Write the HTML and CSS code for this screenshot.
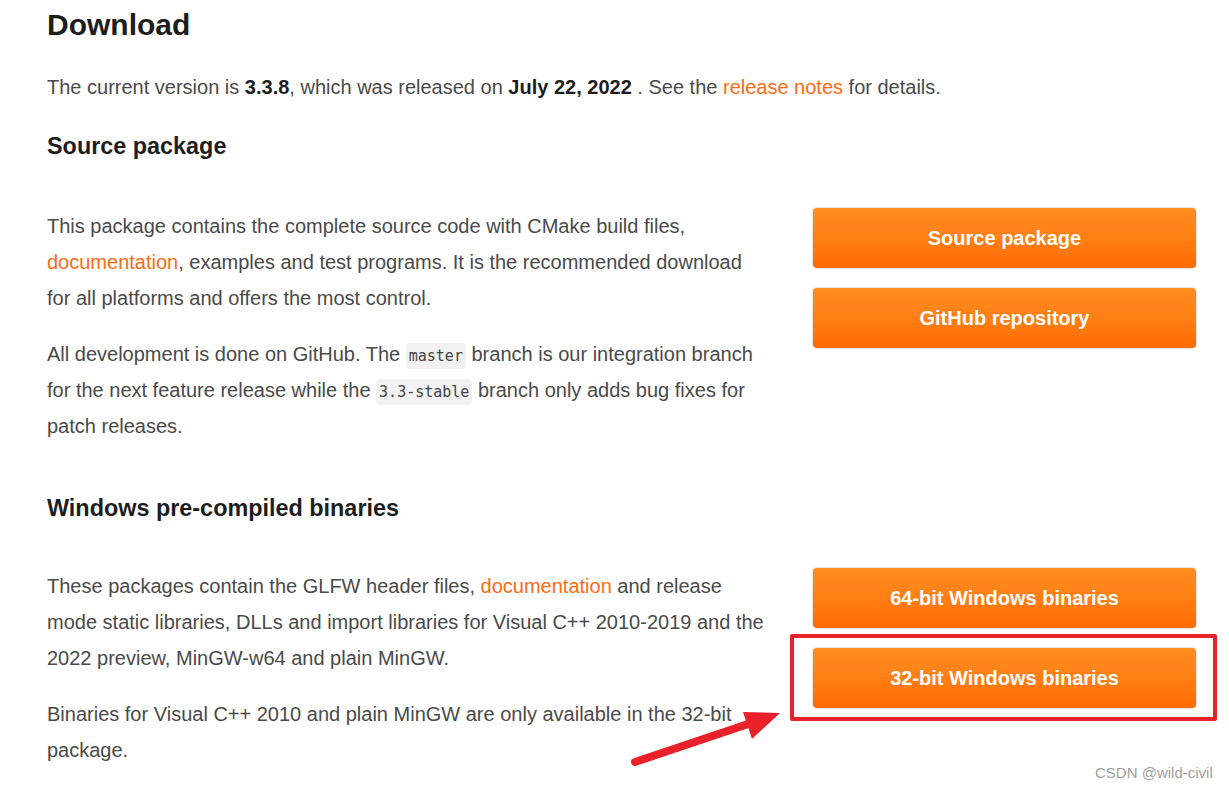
FILE: index.html
```html
<!DOCTYPE html>
<html>
<head>
<meta charset="utf-8">
<link rel="stylesheet" href="styles.css">
</head>
<body>
<main class="page">
  <h1 class="title">Download</h1>
  <p class="intro">The current version is <strong>3.3.8</strong>, which was released on <strong>July 22, 2022</strong> . See the <a href="#">release notes</a> for details.</p>

  <h3 class="section-title">Source package</h3>
  <section class="row">
    <div class="text-col">
      <p>This package contains the complete source code with CMake build files, <a href="#">documentation</a>, examples and test programs. It is the recommended download for all platforms and offers the most control.</p>
      <p>All development is done on GitHub. The <code>master</code> branch is our integration branch for the next feature release while the <code>3.3-stable</code> branch only adds bug fixes for patch releases.</p>
    </div>
    <div class="btn-col">
      <a class="btn" href="#">Source package</a>
      <a class="btn" href="#">GitHub repository</a>
    </div>
  </section>

  <h3 class="section-title section-title-next">Windows pre-compiled binaries</h3>
  <section class="row">
    <div class="text-col">
      <p>These packages contain the GLFW header files, <a href="#">documentation</a> and release mode static libraries, DLLs and import libraries for Visual C++ 2010-2019 and the 2022 preview, MinGW-w64 and plain MinGW.</p>
      <p>Binaries for Visual C++ 2010 and plain MinGW are only available in the 32-bit package.</p>
    </div>
    <div class="btn-col">
      <a class="btn" href="#">64-bit Windows binaries</a>
      <a class="btn" href="#">32-bit Windows binaries</a>
    </div>
  </section>
</main>

<div class="highlight-box"></div>
<svg class="arrow" width="200" height="100" viewBox="0 0 200 100">
  <line x1="15" y1="72" x2="140" y2="30" stroke="#e8212b" stroke-width="8" stroke-linecap="round"/>
  <polygon points="123,22 160,23 132,49" fill="#e8212b"/>
</svg>
<div class="watermark">CSDN @wild-civil</div>
</body>
</html>
```
FILE: styles.css
```css
html, body {
  margin: 0;
  padding: 0;
  background: #ffffff;
}

body {
  font-family: "Liberation Sans", Arial, sans-serif;
  color: #4a4a4a;
  overflow: hidden;
}

.page {
  padding: 7px 0 0 47px;
}

.title {
  margin: 0 0 26px;
  font-size: 30px;
  line-height: 36px;
  font-weight: bold;
  color: #1d1d1d;
}

p {
  margin: 0 0 20px;
  font-size: 20px;
  line-height: 36px;
}

.intro {
  margin-bottom: 26px;
}

strong {
  color: #1d1d1d;
}

a {
  color: #ff6a13;
  text-decoration: none;
}

.section-title {
  margin: 0 0 47px;
  font-size: 23.4px;
  line-height: 30px;
  font-weight: bold;
  color: #1d1d1d;
}

.section-title-next {
  margin-bottom: 45px;
}

.row {
  display: flex;
  align-items: flex-start;
  margin-bottom: 29px;
}

.text-col {
  width: 720px;
}

.btn-col {
  margin-left: 46px;
  width: 383px;
  display: flex;
  flex-direction: column;
  gap: 20px;
}

.btn {
  display: flex;
  align-items: center;
  justify-content: center;
  height: 60px;
  border-radius: 4px;
  background: linear-gradient(to bottom, #ff8d22 0%, #ff7f14 50%, #ff6a02 100%);
  box-shadow: 0 0 1px 1px rgba(0, 0, 0, 0.12);
  color: #ffffff;
  font-size: 20px;
  font-weight: bold;
}

code {
  font-family: "DejaVu Sans Mono", "Liberation Mono", monospace;
  font-size: 15px;
  line-height: 1;
  color: #444;
  background: #f2f2f2;
  border-radius: 4px;
  padding: 4px 3px;
}

.highlight-box {
  position: absolute;
  left: 790px;
  top: 634px;
  width: 419px;
  height: 79px;
  border: 4px solid #e8212b;
  border-radius: 2px;
}

.arrow {
  position: absolute;
  left: 620px;
  top: 690px;
}

.watermark {
  position: absolute;
  left: 1095px;
  top: 764px;
  font-family: "Liberation Sans", Arial, sans-serif;
  font-size: 15px;
  color: #a0a0a0;
}
```
